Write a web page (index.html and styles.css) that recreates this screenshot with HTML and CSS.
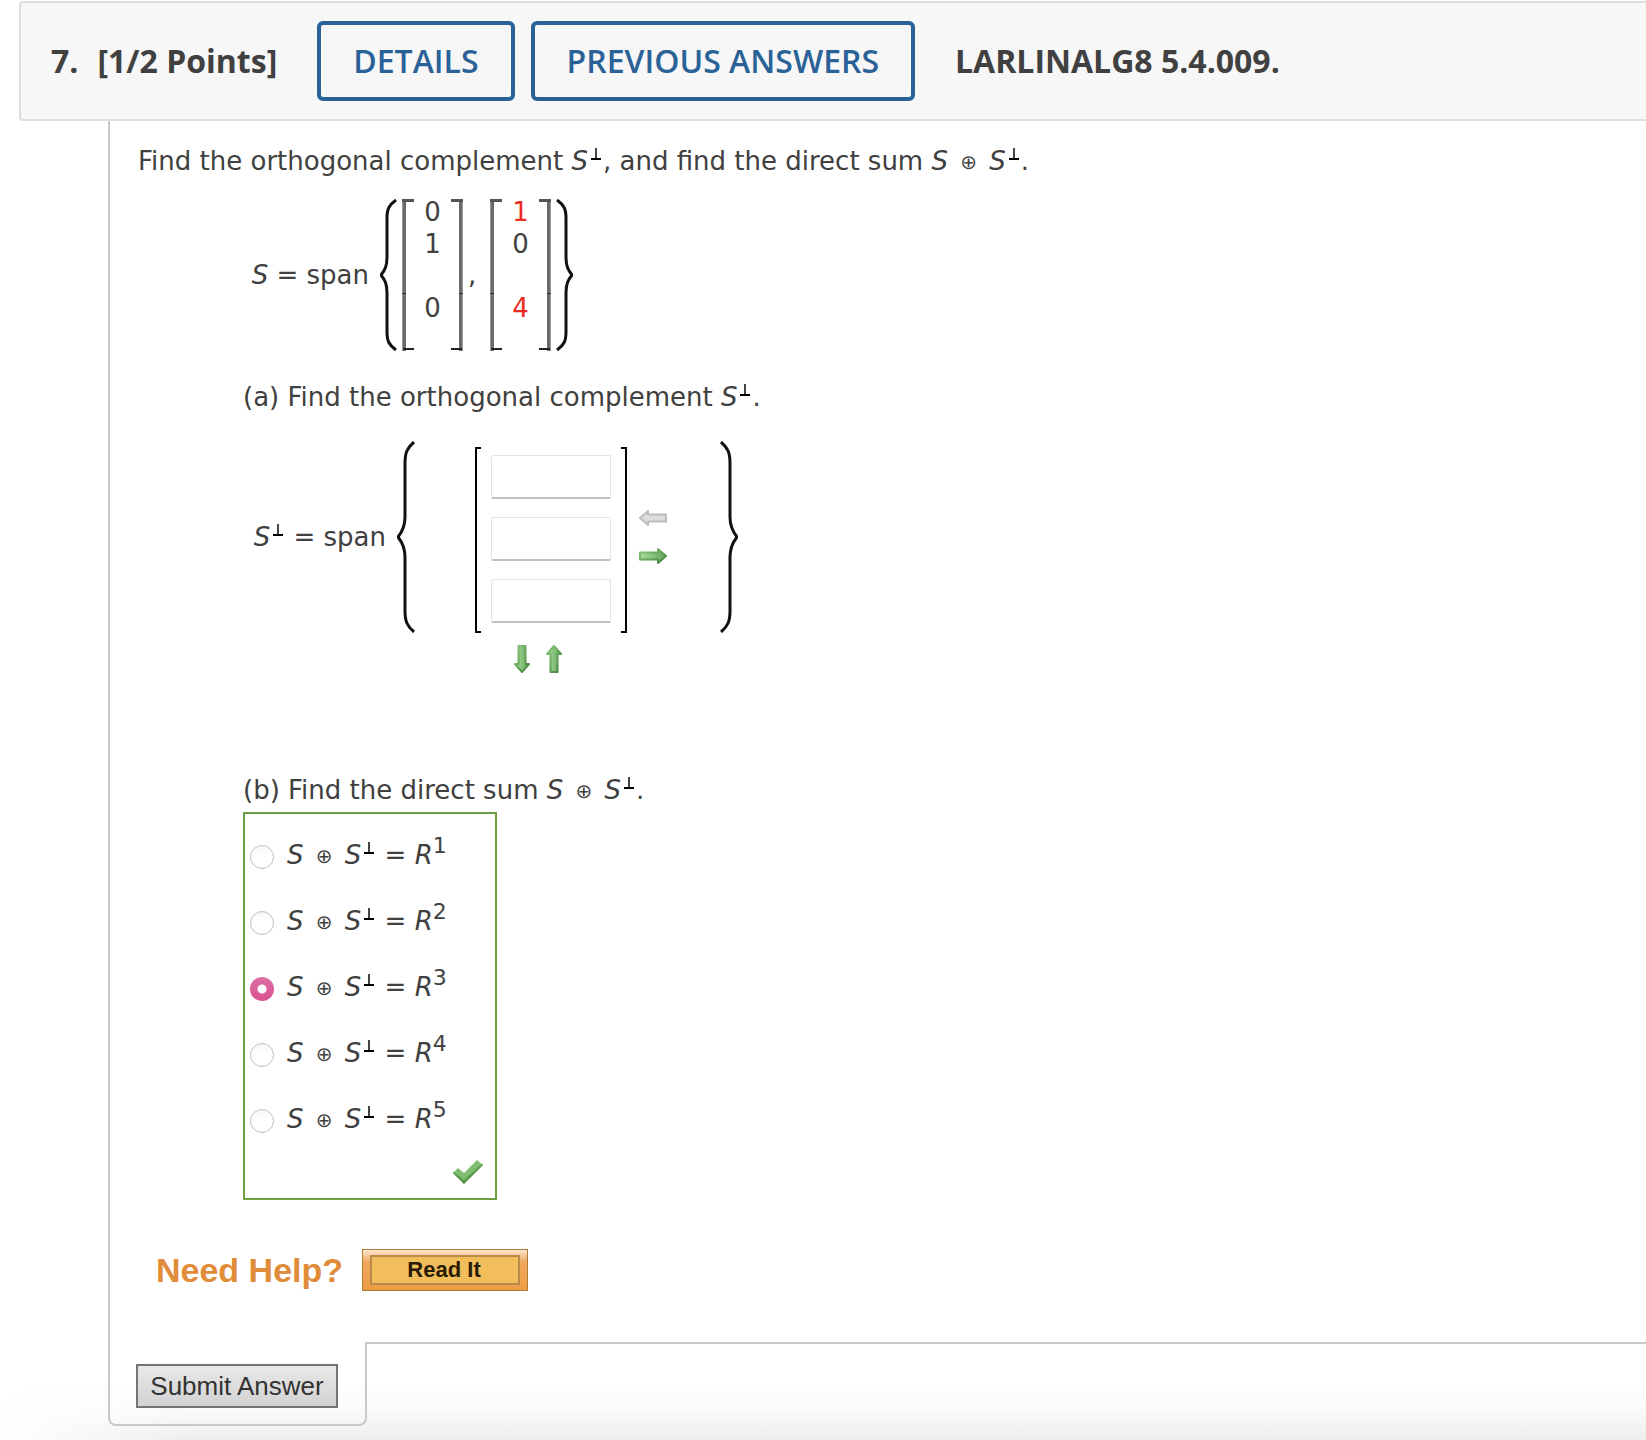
FILE: index.html
```html
<!DOCTYPE html>
<html lang="en">
<head>
    <meta charset="UTF-8">
    <meta name="viewport" content="width=device-width, initial-scale=1.0">
    <title>LARLINALG8 5.4.009.</title>
    <link rel="stylesheet" href="styles.css">
</head>
<body>
    <!-- shared shapes -->
    <svg class="defs" width="0" height="0" aria-hidden="true">
        <defs>
            <linearGradient id="green" x1="0" y1="0" x2="1" y2="1">
                <stop offset="0" stop-color="#8cc97c"/>
                <stop offset="1" stop-color="#3f8138"/>
            </linearGradient>
            <linearGradient id="greenLight" x1="0" y1="0" x2="1" y2="0">
                <stop offset="0" stop-color="#a6d998"/>
                <stop offset="1" stop-color="#66a85c"/>
            </linearGradient>
            <symbol id="perp" viewBox="0 0 10 12">
                <path d="M4 0h2v10H4z" fill="#444"/>
                <path d="M0 10h10v2H0z" fill="#000"/>
            </symbol>
            <symbol id="bracket" viewBox="0 0 12 152">
                <path d="M0 0h4v152H0z" fill="#6a6a6a"/>
                <path d="M0 0h1v152H0z" fill="#999"/>
                <path d="M0 0h12v3H0z" fill="#555"/>
                <path d="M1 149h11v2H1z" fill="#222"/>
                <path d="M0 94h4v1H0z" fill="#333"/>
            </symbol>
            <symbol id="arrow" viewBox="0 0 28 16">
                <path d="M1 4.500H19V1L27 8L19 15V11.500H1z" fill="url(#greenLight)" stroke="url(#green)" stroke-width="2" stroke-linejoin="round"/>
            </symbol>
        </defs>
    </svg>

    <div class="page">
        <header class="question-header">
            <span class="number">7.</span>
            <span class="points">[1/2 Points]</span>
            <button type="button" class="header-button">DETAILS</button>
            <button type="button" class="header-button">PREVIOUS ANSWERS</button>
            <span class="source">LARLINALG8 5.4.009.</span>
        </header>

        <form class="question" onsubmit="return false">
            <div class="content">
                <p>Find the orthogonal complement <i>S</i><svg class="perp"><use href="#perp"/></svg>, and find the direct sum <i>S</i> <span class="oplus">⊕</span> <i>S</i><svg class="perp"><use href="#perp"/></svg>.</p>

                <div class="parts">
                    <div class="span-row">
                        <span class="span-label"><i>S</i> = span</span>
                        <svg class="brace" viewBox="0 0 17 152"><path d="M16 1C9 6 7 10 7 19V58C7 67 5 71 1 76C5 81 7 85 7 94V133C7 142 9 146 16 151"/></svg>
                        <div class="vector">
                            <svg class="bracket"><use href="#bracket"/></svg>
                            <div class="entries"><span>0</span><span>1</span><span></span><span>0</span></div>
                            <svg class="bracket flip"><use href="#bracket"/></svg>
                        </div>
                        <span class="comma">,</span>
                        <div class="vector">
                            <svg class="bracket"><use href="#bracket"/></svg>
                            <div class="entries"><span class="red">1</span><span>0</span><span></span><span class="red">4</span></div>
                            <svg class="bracket flip"><use href="#bracket"/></svg>
                        </div>
                        <svg class="brace flip" viewBox="0 0 17 152"><path d="M16 1C9 6 7 10 7 19V58C7 67 5 71 1 76C5 81 7 85 7 94V133C7 142 9 146 16 151"/></svg>
                    </div>

                    <p>(a) Find the orthogonal complement <i>S</i><svg class="perp"><use href="#perp"/></svg>.</p>

                    <div class="answer-row">
                        <span class="answer-label"><i>S</i><svg class="perp"><use href="#perp"/></svg> = span</span>
                        <svg class="brace tall" viewBox="0 0 18 192"><path d="M17 1C10 7 8 12 8 22V76C8 86 5 91 1 96C5 101 8 106 8 116V170C8 180 10 185 17 191"/></svg>
                        <div class="matrix">
                            <div class="matrix-cells">
                                <input type="text" aria-label="Row 1">
                                <input type="text" aria-label="Row 2">
                                <input type="text" aria-label="Row 3">
                            </div>
                            <div class="row-tools">
                                <button type="button" class="tool" aria-label="Add row"><svg width="16" height="28" viewBox="0 0 16 28"><path d="M4.500 1H11.500V19H15L8 27L1 19H4.500z" fill="url(#greenLight)" stroke="url(#green)" stroke-width="2" stroke-linejoin="round"/></svg></button>
                                <button type="button" class="tool" aria-label="Remove row"><svg width="16" height="28" viewBox="0 0 16 28"><path d="M4.500 27H11.500V9H15L8 1L1 9H4.500z" fill="url(#greenLight)" stroke="url(#green)" stroke-width="2" stroke-linejoin="round"/></svg></button>
                            </div>
                        </div>
                        <div class="column-tools">
                            <button type="button" class="tool" aria-label="Remove column" disabled><svg width="28" height="16" viewBox="0 0 28 16"><path d="M27 4.500H9V1L1 8L9 15V11.500H27z" fill="#dcdcdc" stroke="#bcbcbc" stroke-width="2" stroke-linejoin="round"/></svg></button>
                            <button type="button" class="tool" aria-label="Add column"><svg width="28" height="16"><use href="#arrow"/></svg></button>
                        </div>
                        <svg class="brace tall flip" viewBox="0 0 18 192"><path d="M17 1C10 7 8 12 8 22V76C8 86 5 91 1 96C5 101 8 106 8 116V170C8 180 10 185 17 191"/></svg>
                    </div>

                    <p>(b) Find the direct sum <i>S</i> <span class="oplus">⊕</span> <i>S</i><svg class="perp"><use href="#perp"/></svg>.</p>

                    <div class="choices">
                        <label class="choice"><input type="radio" name="sum"><span><i>S</i> <span class="oplus">⊕</span> <i>S</i><svg class="perp"><use href="#perp"/></svg> = <i>R</i><sup>1</sup></span></label>
                        <label class="choice"><input type="radio" name="sum"><span><i>S</i> <span class="oplus">⊕</span> <i>S</i><svg class="perp"><use href="#perp"/></svg> = <i>R</i><sup>2</sup></span></label>
                        <label class="choice"><input type="radio" name="sum" checked><span><i>S</i> <span class="oplus">⊕</span> <i>S</i><svg class="perp"><use href="#perp"/></svg> = <i>R</i><sup>3</sup></span></label>
                        <label class="choice"><input type="radio" name="sum"><span><i>S</i> <span class="oplus">⊕</span> <i>S</i><svg class="perp"><use href="#perp"/></svg> = <i>R</i><sup>4</sup></span></label>
                        <label class="choice"><input type="radio" name="sum"><span><i>S</i> <span class="oplus">⊕</span> <i>S</i><svg class="perp"><use href="#perp"/></svg> = <i>R</i><sup>5</sup></span></label>
                        <svg class="check" viewBox="0 0 32 26" role="img" aria-label="Correct">
                            <path d="M1 14L6 9L12 14L25 1L31 6L12 25z" fill="#80bd72"/>
                            <path d="M1 14L12 25L31 6L30 5L12 21L2 13z" fill="#5a9a50"/>
                        </svg>
                    </div>
                </div>

                <div class="help">
                    <span class="help-title">Need Help?</span>
                    <button type="button" class="read-it"><span>Read It</span></button>
                </div>
            </div>

            <div class="footer">
                <div class="submit-tab">
                    <button type="submit" class="submit">Submit Answer</button>
                </div>
                <div class="footer-line"></div>
            </div>
        </form>
    </div>
</body>
</html>
```
FILE: styles.css
```css
* {
    box-sizing: border-box;
}
body {
    margin: 0;
    color: #404040;
    font-family: Verdana, "DejaVu Sans", sans-serif;
    font-size: 26px;
    line-height: 32px;
}
p {
    margin: 0;
}
button {
    cursor: pointer;
}
.defs {
    position: absolute;
}
.page {
    min-height: 100vh;
    padding: 1px 0 0 19px;
    background:
        linear-gradient(80deg, #fff, rgba(255, 255, 255, 0) 200px) bottom / 100% 60px no-repeat,
        linear-gradient(#fff, #fafafa 50%, #ededed) bottom / 100% 60px no-repeat,
        #fff;
}

/* header bar */
.question-header {
    display: flex;
    align-items: center;
    padding: 18px 0 18px 30px;
    background: #f7f7f7;
    border: 2px solid #dddfdf;
    border-right: none;
    border-radius: 4px 0 0 4px;
    font-family: "Open Sans", sans-serif;
    font-size: 32px;
    line-height: 40px;
    font-weight: 700;
    white-space: nowrap;
}
.points {
    margin: 0 40px 0 19px;
}
.header-button {
    height: 80px;
    margin-right: 16px;
    padding: 0 32px;
    background: none;
    border: 4px solid #2a6298;
    border-radius: 6px;
    color: #2a6298;
    font: inherit;
    font-weight: 600;
}
.source {
    margin-left: 24px;
}

/* question body */
.question {
    margin-left: 89px;
}
.content {
    padding: 24px 0 51px 28px;
    border-left: 2px solid #c8c8c8;
}
.parts {
    padding-left: 105px;
}
.perp {
    width: 10px;
    height: 12px;
    margin: 0 2px 0 3px;
    vertical-align: 10px;
}
.oplus {
    margin: 0 4px;
    font-size: 20px;
    line-height: 20px;
    vertical-align: 1px;
}
sup {
    font-size: 22px;
    line-height: 0;
    vertical-align: 11px;
}
.brace {
    flex: none;
    width: 17px;
    height: 152px;
    fill: none;
    stroke: #111;
    stroke-width: 3;
}
.brace.tall {
    width: 18px;
    height: 192px;
}
.flip {
    transform: scaleX(-1);
}
.span-row {
    display: flex;
    align-items: center;
    gap: 5px;
    margin: 22px 0 30px;
}
.span-label {
    width: 126px;
    margin-right: 6px;
    text-align: right;
}
.vector {
    display: flex;
    justify-content: space-between;
    width: 61px;
}
.bracket {
    flex: none;
    width: 12px;
    height: 152px;
}
.entries {
    display: grid;
    grid-template-rows: repeat(4, 26px);
    gap: 6px;
    line-height: 26px;
}
.red {
    color: #ee2a20;
}
.comma {
    width: 17px;
}

/* matrix answer */
.answer-row {
    display: flex;
    align-items: flex-start;
    margin: 28px 0 101px;
}
.answer-label {
    width: 143px;
    margin-right: 11px;
    line-height: 192px;
    text-align: right;
    white-space: nowrap;
}
.matrix {
    width: 152px;
    margin: 6px 12px 0 60px;
}
.matrix-cells {
    display: grid;
    gap: 18px;
    padding: 8px 14px 10px;
    background:
        linear-gradient(#000, #000) 0 0 / 6px 2px,
        linear-gradient(#000, #000) 100% 0 / 6px 2px,
        linear-gradient(#000, #000) 0 100% / 6px 2px,
        linear-gradient(#000, #000) 100% 100% / 6px 2px;
    background-repeat: no-repeat;
    border: solid #000;
    border-width: 0 2px;
    background-origin: border-box;
}
.matrix-cells input {
    width: 100%;
    height: 44px;
    padding: 0 8px;
    background: #fff;
    border: 1px solid #e4e4e4;
    border-bottom: 2px solid #bfbfbf;
    border-radius: 2px;
    font: inherit;
}
.tool {
    display: block;
    padding: 0;
    background: none;
    border: none;
}
.tool svg {
    display: block;
}
.row-tools {
    display: flex;
    gap: 16px;
    padding: 12px 0 0 39px;
}
.column-tools {
    display: grid;
    gap: 22px;
    margin: 69px 53px 0 0;
}

/* multiple choice */
.choices {
    display: flex;
    flex-direction: column;
    gap: 34px;
    width: 254px;
    margin-top: 6px;
    padding: 25px 11px 13px 5px;
    border: 2px solid #6c9f42;
}
.choice {
    display: flex;
    align-items: center;
    gap: 13px;
    white-space: nowrap;
}
.choice input {
    appearance: none;
    width: 24px;
    height: 24px;
    margin: 4px 0 0;
    background: linear-gradient(#f6f6f6, #fff 40%);
    border: 1px solid #c0c0c0;
    border-radius: 50%;
}
.choice input:checked {
    background: radial-gradient(circle, #fff 4px, transparent 5px), linear-gradient(#de6fa4, #d9528f);
    border: none;
}
.check {
    align-self: flex-end;
    width: 32px;
    height: 26px;
    margin-top: -10px;
}

/* help and submit */
.help {
    display: flex;
    align-items: center;
    gap: 19px;
    margin-top: 49px;
    padding-left: 18px;
    font-family: Arial, "Liberation Sans", sans-serif;
    font-weight: 700;
}
.help-title {
    color: #e08c38;
    font-size: 34px;
}
.read-it {
    width: 166px;
    height: 42px;
    padding: 5px 7px;
    background: linear-gradient(#fbe6cf, #f0a860 30%, #ec9c44);
    border: 1px solid #ad7a38;
    color: #2a1c04;
    font: inherit;
    font-size: 22px;
}
.read-it span {
    display: block;
    background: #f2bd5b;
    border: 2px solid #b98a4a;
    line-height: 26px;
    padding-right: 2px;
}
.footer {
    display: flex;
}
.submit-tab {
    padding: 22px 27px 16px 26px;
    border: 2px solid #c8c8c8;
    border-top: none;
    border-radius: 0 0 8px 8px;
}
.submit {
    width: 202px;
    height: 44px;
    padding: 0;
    background: linear-gradient(#e8e8e8, #d2d2d2);
    border: 2px solid #747474;
    color: #333;
    font-family: Arial, "Liberation Sans", sans-serif;
    font-size: 26px;
    white-space: nowrap;
}
.footer-line {
    flex: 1;
    height: 2px;
    margin-left: -2px;
    background: #c8c8c8;
}
```
